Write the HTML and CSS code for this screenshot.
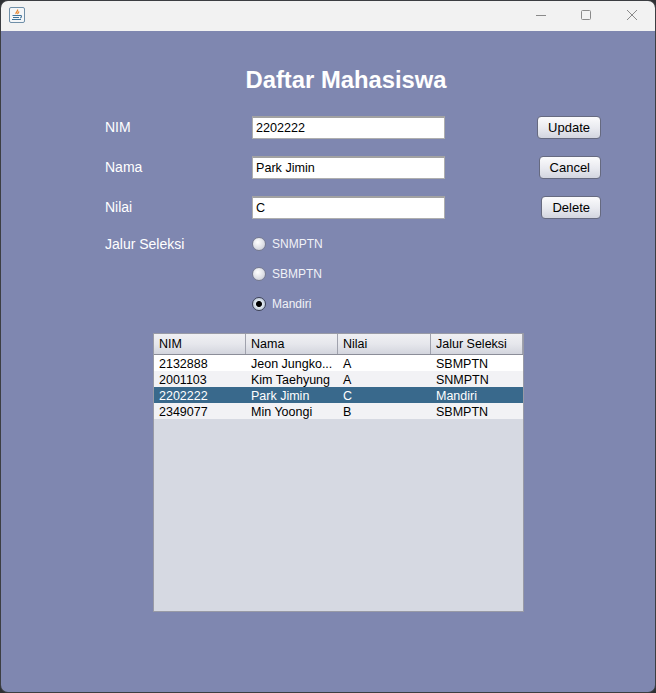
FILE: index.html
```html
<!DOCTYPE html>
<html lang="en">
<head>
    <meta charset="UTF-8">
    <meta name="viewport" content="width=device-width, initial-scale=1.0">
    <title>Daftar Mahasiswa</title>
    <link rel="stylesheet" href="styles.css">
</head>
<body>
    <div class="window">
        <div class="titlebar">
            <svg class="app-icon" width="16" height="16" viewBox="0 0 16 16">
                <rect x="0.5" y="0.5" width="15" height="15" rx="1.5" fill="#f4f6f8" stroke="#6f8fa8"/>
                <path d="M8.5 2.5C9.5 4 6.5 5 7 7M10 4.5C9.5 5.5 8.5 6 8.8 7.2" fill="none" stroke="#e8832a" stroke-width="1.3"/>
                <path d="M3.5 8.5H10.5M4 10.5H10M3 12.5H12M10.5 8.5C13 8 13 10.5 11 11" fill="none" stroke="#3f7299" stroke-width="1.1"/>
            </svg>
            <div class="window-buttons">
                <svg class="min-icon" width="12" height="12" viewBox="0 0 12 12"><path d="M1 6.5H11" stroke="#8a8a8a"/></svg>
                <svg width="12" height="12" viewBox="0 0 12 12"><rect x="1.5" y="1.5" width="9" height="9" rx="1" fill="none" stroke="#8a8a8a"/></svg>
                <svg width="12" height="12" viewBox="0 0 12 12"><path d="M1 1L11 11M11 1L1 11" stroke="#8a8a8a"/></svg>
            </div>
        </div>

        <div class="content">
            <h1>Daftar Mahasiswa</h1>

            <div class="form">
                <label>NIM</label>
                <input class="field" type="text" value="2202222">
                <button>Update</button>

                <label>Nama</label>
                <input class="field" type="text" value="Park Jimin">
                <button>Cancel</button>

                <label>Nilai</label>
                <input class="field" type="text" value="C">
                <button>Delete</button>
            </div>

            <div class="jalur">
                <label>Jalur Seleksi</label>
                <div class="radios">
                    <div class="radio"><span class="dot"></span>SNMPTN</div>
                    <div class="radio"><span class="dot"></span>SBMPTN</div>
                    <div class="radio"><span class="dot checked"></span>Mandiri</div>
                </div>
            </div>

            <div class="table-box">
                <div class="row head">
                    <div>NIM</div>
                    <div>Nama</div>
                    <div>Nilai</div>
                    <div>Jalur Seleksi</div>
                </div>
                <div class="row">
                    <div>2132888</div>
                    <div>Jeon Jungko...</div>
                    <div>A</div>
                    <div>SBMPTN</div>
                </div>
                <div class="row alt">
                    <div>2001103</div>
                    <div>Kim Taehyung</div>
                    <div>A</div>
                    <div>SNMPTN</div>
                </div>
                <div class="row selected">
                    <div>2202222</div>
                    <div>Park Jimin</div>
                    <div>C</div>
                    <div>Mandiri</div>
                </div>
                <div class="row alt">
                    <div>2349077</div>
                    <div>Min Yoongi</div>
                    <div>B</div>
                    <div>SBMPTN</div>
                </div>
            </div>
        </div>
    </div>
</body>
</html>
```

FILE: styles.css
```css
html, body {
    margin: 0;
    height: 693px;
    overflow: hidden;
    background-color: #2e3033;
    font-family: "Liberation Sans", Arial, sans-serif;
}
.window {
    box-sizing: border-box;
    width: 656px;
    height: 693px;
    padding: 1px;
    border-radius: 8px;
    overflow: hidden;
    background-color: #3c3e42;
}
.titlebar {
    display: flex;
    align-items: center;
    justify-content: space-between;
    height: 30px;
    padding: 0 17px 2px 8px;
    box-sizing: border-box;
    background-color: #f2f2f2;
    border-radius: 7px 7px 0 0;
}
.window-buttons {
    display: flex;
    gap: 34px;
}
.min-icon {
    margin-right: -1px;
}
.content {
    height: 661px;
    padding-top: 1px;
    box-sizing: border-box;
    background-color: #7f87b0;
    border-radius: 0 0 7px 7px;
    color: #fff;
}
h1 {
    margin: 34px 0 0 244.5px;
    height: 28px;
    font-size: 23.8px;
    line-height: 28px;
    font-weight: bold;
}
label {
    font-size: 14px;
}
.form {
    display: grid;
    grid-template-columns: 147px 193px 156px;
    grid-auto-rows: 23px;
    row-gap: 17px;
    align-items: center;
    margin: 22px 0 0 104px;
}
.form label {
    padding-bottom: 2px;
}
.field {
    box-sizing: border-box;
    width: 193px;
    height: 23px;
    padding: 0 3px;
    border: 1px solid #aeaeae;
    border-top: 2px solid #a2a2a2;
    background-color: #fff;
    color: #000;
    font-family: inherit;
    font-size: 12.6px;
}
button {
    justify-self: end;
    height: 23px;
    padding: 0 10px;
    border: 1px solid #666a80;
    border-radius: 4px;
    background: linear-gradient(#fbfbfc, #e8e9ef 55%, #d3d5df);
    color: #000;
    font-family: inherit;
    font-size: 13px;
}
.jalur {
    display: grid;
    grid-template-columns: 147px 1fr;
    margin: 15px 0 0 104px;
}
.jalur label {
    line-height: 20px;
}
.radios {
    display: flex;
    flex-direction: column;
    gap: 10px;
}
.radio {
    display: flex;
    align-items: center;
    gap: 6px;
    height: 20px;
    font-size: 12px;
    color: #f1f2f7;
}
.dot {
    box-sizing: border-box;
    width: 14px;
    height: 14px;
    border: 1px solid #777b90;
    border-radius: 50%;
    background: radial-gradient(circle at 40% 35%, #fff, #d5d7df 70%, #bcbfcc);
}
.dot.checked {
    background: radial-gradient(circle, #000 0 2.5px, #dfe6ee 3.5px, #a9b8cc);
    border-color: #3d4256;
}
.table-box {
    box-sizing: border-box;
    width: 371px;
    height: 279px;
    margin: 19px 0 0 152px;
    border: 1px solid #989aa6;
    background-color: #d6d9e2;
    color: #000;
    font-size: 12.5px;
}
.row {
    display: grid;
    grid-template-columns: 92px 92px 93px 92px;
    height: 16px;
    line-height: 18px;
    background-color: #fff;
}
.row > div {
    padding-left: 5px;
    white-space: nowrap;
    overflow: hidden;
}
.row.alt {
    background-color: #f2f2f5;
}
.row.selected {
    background-color: #39698c;
    color: #fff;
}
.row.head {
    height: 21px;
    line-height: 21px;
    background: linear-gradient(#f0f0f3, #e6e7ec 50%, #d3d5dd);
    border-bottom: 1px solid #8b8d98;
    box-sizing: border-box;
}
.row.head > div {
    border-right: 1px solid #a0a2ad;
}
```
